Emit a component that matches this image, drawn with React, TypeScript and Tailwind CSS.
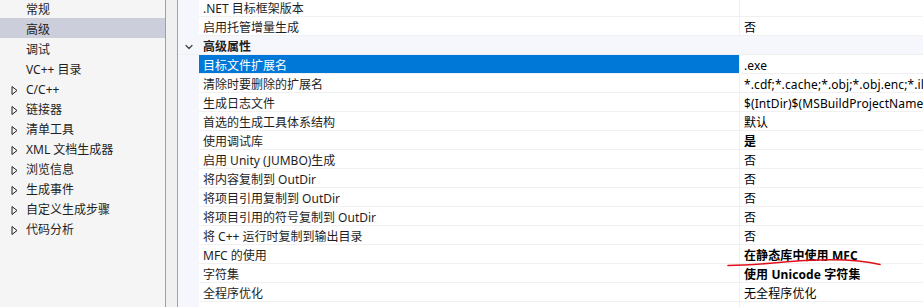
import { ChevronDown } from "lucide-react";

const font = { fontFamily: '"Segoe UI", "Noto Sans", "Noto Sans CJK SC", sans-serif' };

const navItems: { label: string; expandable?: boolean; selected?: boolean }[] = [
  { label: "常规" },
  { label: "高级", selected: true },
  { label: "调试" },
  { label: "VC++ 目录" },
  { label: "C/C++", expandable: true },
  { label: "链接器", expandable: true },
  { label: "清单工具", expandable: true },
  { label: "XML 文档生成器", expandable: true },
  { label: "浏览信息", expandable: true },
  { label: "生成事件", expandable: true },
  { label: "自定义生成步骤", expandable: true },
  { label: "代码分析", expandable: true },
];

type Prop = { name: string; value: string; bold?: boolean; selected?: boolean };

const topRows: Prop[] = [
  { name: ".NET 目标框架版本", value: "" },
  { name: "启用托管增量生成", value: "否" },
];

const advancedRows: Prop[] = [
  { name: "目标文件扩展名", value: ".exe", selected: true },
  { name: "清除时要删除的扩展名", value: "*.cdf;*.cache;*.obj;*.obj.enc;*.ilk;*.ipdb;*.iobj;*.resources;*.tlb;*.tli;*.tlh;*.tmp;*.rsp;*.pgc;*.pgd;*.meta;*.tlog;*.manifest;*.res;*.pch;*.exp;*.idb;*.rep;*.xdc;*.pdb;*_manifest.rc;*.bsc;*.sbr;*.xml;*.metagen;*.bi" },
  { name: "生成日志文件", value: "$(IntDir)$(MSBuildProjectName).log" },
  { name: "首选的生成工具体系结构", value: "默认" },
  { name: "使用调试库", value: "是", bold: true },
  { name: "启用 Unity (JUMBO)生成", value: "否" },
  { name: "将内容复制到 OutDir", value: "否" },
  { name: "将项目引用复制到 OutDir", value: "否" },
  { name: "将项目引用的符号复制到 OutDir", value: "否" },
  { name: "将 C++ 运行时复制到输出目录", value: "否" },
  { name: "MFC 的使用", value: "在静态库中使用 MFC", bold: true },
  { name: "字符集", value: "使用 Unicode 字符集", bold: true },
  { name: "全程序优化", value: "无全程序优化" },
  { name: "", value: "" },
];

function PropRow({ row }: { row: Prop }) {
  return (
    <div className="flex h-[19px] shrink-0">
      <div className="w-[21px] shrink-0 bg-[#f5f7fc]" />
      <div
        className={`w-[540px] shrink-0 pl-[4px] pt-[4px] flex items-center whitespace-nowrap overflow-hidden border-b border-[#f0f0f0] ${
          row.selected ? "bg-[#0078d7] text-white" : "bg-white text-[#1e1e1e]"
        }`}
      >
        {row.name}
      </div>
      <div
        className={`flex-1 pl-[4px] pt-[4px] flex items-center whitespace-nowrap overflow-hidden bg-white border-b border-l border-[#f0f0f0] text-black tracking-[0.1px] ${
          row.bold ? "font-bold" : ""
        }`}
      >
        {row.value}
      </div>
    </div>
  );
}

export default function App() {
  return (
    <div className="relative w-[923px] h-[307px] overflow-hidden flex text-[12px] bg-white" style={font}>
      {/* category tree */}
      <div className="w-[166px] shrink-0 bg-[#f5f5f5] border-r border-[#a0a0a0] flex flex-col">
        <div className="-mt-[2px]">
          {navItems.map((item) => (
            <div
              key={item.label}
              className={`h-[20px] pt-[4px] flex items-center text-[#1e1e1e] ${item.selected ? "bg-[#cccedb]" : ""}`}
            >
              <div className="w-[26px] shrink-0 flex justify-center pl-[2px]">
                {item.expandable && (
                  <svg width="7" height="9" viewBox="0 0 7 9">
                    <path d="M1 0.5 L6 4.5 L1 8.5 Z" fill="none" stroke="#1e1e1e" strokeWidth="1" />
                  </svg>
                )}
              </div>
              <span className="whitespace-nowrap">{item.label}</span>
            </div>
          ))}
        </div>
      </div>
      <div className="w-[12px] shrink-0 bg-[#f0f0f0] border-r border-[#a0a0a0]" />

      {/* property grid */}
      <div className="flex-1 flex flex-col bg-[#f5f7fc] overflow-hidden">
        <div className="-mt-[2px] flex flex-col">
          {topRows.map((r) => (
            <PropRow key={r.name} row={r} />
          ))}
          <div className="flex h-[19px] shrink-0 items-center pt-[4px] bg-[#f5f7fc] border-b border-[#f0f0f0]">
            <div className="w-[21px] shrink-0 flex justify-center">
              <ChevronDown className="w-[12px] h-[12px] text-[#444]" strokeWidth={2.5} />
            </div>
            <span className="pl-[4px] font-bold text-[#1e1e1e]">高级属性</span>
          </div>
          {advancedRows.map((r, i) => (
            <PropRow key={i} row={r} />
          ))}
        </div>
      </div>

      {/* hand-drawn red mark */}
      <svg className="absolute left-0 top-0 pointer-events-none" width="923" height="307">
        <path
          d="M728 265.5 C 758 265, 780 262, 805 260.5 C 840 258.5, 862 260, 880 264.5"
          fill="none"
          stroke="#e0101a"
          strokeWidth="1.6"
          strokeLinecap="round"
        />
      </svg>
    </div>
  );
}
